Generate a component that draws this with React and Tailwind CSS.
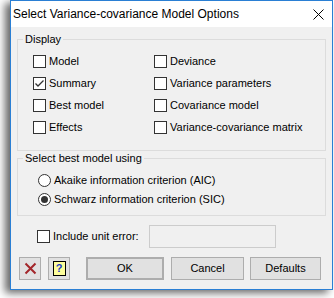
import { useState } from 'react'

const font = { fontFamily: '"Liberation Sans", Arial, sans-serif' }

function CheckBox({ checked }) {
  return (
    <span className="flex h-[13px] w-[13px] shrink-0 items-center justify-center border border-[#333333] bg-white">
      {checked && (
        <svg width="11" height="11" viewBox="0 0 11 11">
          <path d="M1.5 5.5 L4 8 L9.5 2.5" fill="none" stroke="#333333" strokeWidth="1.3" />
        </svg>
      )}
    </span>
  )
}

function Radio({ checked }) {
  return (
    <span className="flex h-[13px] w-[13px] shrink-0 items-center justify-center rounded-full border border-[#333333] bg-white">
      {checked && <span className="h-[7px] w-[7px] rounded-full bg-[#333333]" />}
    </span>
  )
}

function Option({ label, checked }) {
  return (
    <div className="flex h-[22px] items-center gap-[3px]">
      <CheckBox checked={checked} />
      <span>{label}</span>
    </div>
  )
}

function Button({ children, className = '' }) {
  return (
    <button
      className={`flex h-[23px] items-center justify-center border border-[#adadad] bg-[#e1e1e1] text-[11px] text-black ${className}`}
    >
      {children}
    </button>
  )
}

export default function App() {
  const [method] = useState('sic')

  return (
    <div className="h-[298px] w-[334px] overflow-hidden bg-white pl-[10px]" style={font}>
      <div className="flex h-[290px] w-[323px] flex-col border border-[#2a7fd4] bg-[#f0f0f0] text-[11px] text-black shadow-[-5px_3px_8px_rgba(0,0,0,0.6)]">
        <div className="flex h-[26px] items-center justify-between bg-white pl-[2px] pr-[8px] text-[12px]">
          <span>Select Variance-covariance Model Options</span>
          <svg width="11" height="11" viewBox="0 0 11 11">
            <path d="M0.5 0.5 L10.5 10.5 M10.5 0.5 L0.5 10.5" stroke="#000" strokeWidth="1" />
          </svg>
        </div>

        {/* Display */}
        <fieldset className="mx-[6px] mt-[6px] border border-[#dcdcdc] pb-[12px]">
          <legend className="ml-[5px] px-[2px] leading-[13px]">Display</legend>
          <div className="mt-[4px] grid grid-cols-[121px_1fr] pl-[15px]">
            <Option label="Model" />
            <Option label="Deviance" />
            <Option label="Summary" checked />
            <Option label="Variance parameters" />
            <Option label="Best model" />
            <Option label="Covariance model" />
            <Option label="Effects" />
            <Option label="Variance-covariance matrix" />
          </div>
        </fieldset>

        {/* Select best model using */}
        <fieldset className="mx-[6px] mt-[1px] border border-[#dcdcdc] pb-[9px]">
          <legend className="ml-[5px] px-[2px] leading-[13px]">Select best model using</legend>
          <div className="mt-[9px] flex flex-col gap-[6px] pl-[20px]">
            <div className="flex h-[13px] items-center gap-[3px]">
              <Radio checked={method === 'aic'} />
              <span>Akaike information criterion (AIC)</span>
            </div>
            <div className="flex h-[13px] items-center gap-[3px]">
              <Radio checked={method === 'sic'} />
              <span>Schwarz information criterion (SIC)</span>
            </div>
          </div>
        </fieldset>

        <div className="mt-[9px] flex items-center pl-[26px]">
          <CheckBox />
          <span className="ml-[3px]">Include unit error:</span>
          <div className="ml-[10px] h-[23px] w-[127px] border border-[#cccccc] bg-[#f0f0f0]" />
        </div>

        <div className="mt-[9px] flex items-center pl-[8px]">
          <Button className="w-[22px]">
            <svg width="13" height="13" viewBox="0 0 13 13">
              <path d="M1.5 1.5 L11.5 11.5 M11.5 1.5 L1.5 11.5" stroke="#a3262a" strokeWidth="2" />
            </svg>
          </Button>
          <Button className="ml-[7px] w-[22px]">
            <span className="flex h-[15px] w-[13px] items-center justify-center border border-black bg-[#fdfd9a] text-[11px] font-bold leading-none text-[#1a3cc8]">
              ?
            </span>
          </Button>
          <Button className="ml-[16px] w-[78px] border-2 border-[#0078d7]">OK</Button>
          <Button className="ml-[7px] w-[73px]">Cancel</Button>
          <Button className="ml-[6px] w-[71px]">Defaults</Button>
        </div>
      </div>
    </div>
  )
}
